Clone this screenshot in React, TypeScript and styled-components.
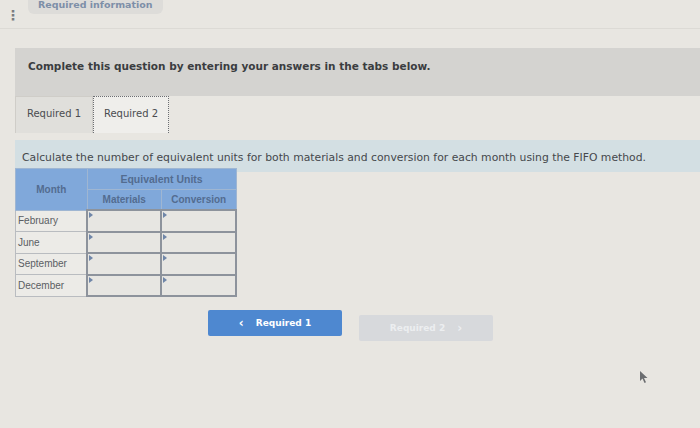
import React from 'react';
import styled, { createGlobalStyle } from 'styled-components';

const GlobalStyle = createGlobalStyle`
  html, body { margin: 0; padding: 0; }
  body { width: 700px; height: 428px; overflow: hidden; background: #e8e6e1; font-family: "DejaVu Sans", Verdana, sans-serif; }
`;

const Page = styled.div`
  position: relative; width: 700px; height: 428px; display: flex; flex-direction: column;
`;

const TopStrip = styled.div`
  height: 28px; display: flex; align-items: flex-start; gap: 8px; padding-left: 6px;
  border-bottom: 1px solid #dcdad5;
`;

const Dots = styled.span`
  color: #7a7c80; font-size: 14px; line-height: 14px; margin-top: 8px; font-weight: bold;
`;

const InfoTab = styled.div`
  padding: 0 10px; height: 14px; background: #dddcd9; white-space: nowrap;
  border-radius: 0 0 6px 6px; color: #7d8fa8; font-weight: bold; font-size: 9.5px; line-height: 10px;
`;

const Content = styled.div`
  padding-left: 15px; display: flex; flex-direction: column;
`;

const Instruction = styled.div`
  margin-top: 19px; height: 48px; box-sizing: border-box; background: #d4d3d0; padding: 12px 0 0 13px;
  font-weight: bold; font-size: 10.5px; color: #3b3d40;
`;

const Tabs = styled.div`
  display: flex; height: 41px; margin-top: -4px; align-items: stretch;
`;

const Tab = styled.div<{ $active?: boolean }>`
  width: ${p => (p.$active ? '74px' : '76px')}; display: flex; align-items: center; justify-content: center;
  font-size: 10px; color: #4a4c50; padding-bottom: 4px;
  background: ${p => (p.$active ? '#efeeeb' : '#e0dfdb')};
  border: ${p => (p.$active ? '1px dotted #6c6e72' : '1px solid #cfcdc8')};
  border-bottom: none;
  margin-top: 4px;
`;

const Prompt = styled.div`
  margin-top: 7px; height: 32px; background: #d3dfe3; display: flex; align-items: center; padding: 2px 0 0 7px;
  box-sizing: border-box; font-size: 10.8px; color: #45484c; white-space: nowrap;
`;

const Table = styled.table`
  border-collapse: collapse; width: 222px; margin-top: -4px; font-family: "Liberation Sans", Arial, sans-serif;
  font-size: 10px;
  th { background: #80a8da; color: #536c90; font-weight: bold; border: 1px solid #9fb6d2; padding: 0; }
  td { height: 19.5px; padding: 0; border: 1px solid #b9bcc0; }
`;

const MonthHead = styled.th`
  width: 71px; height: 40px;
`;

const GroupHead = styled.th`
  height: 20px; font-size: 10.5px;
`;

const SubHead = styled.th`
  height: 19px; width: 74px;
`;

const MonthCell = styled.td`
  background: #ecebe7; color: #5b5e63; padding-left: 2px !important; text-align: left;
`;

const InputCell = styled.td`
  position: relative; background: #e7e6e2; border: 2px solid #8d939c !important;
  &::before {
    content: ''; position: absolute; top: 1px; left: 1px; border-top: 3px solid transparent; border-bottom: 3px solid transparent;
    border-left: 4px solid #6f86a8;
  }
`;

const Buttons = styled.div`
  display: flex; gap: 17px; margin-left: 193px; margin-top: 13px; align-items: flex-start;
`;

const NavButton = styled.button<{ $disabled?: boolean }>`
  width: 134px; height: 26px; border: none; border-radius: 2px;
  background: ${p => (p.$disabled ? '#d7d9dc' : '#4e88d0')};
  color: ${p => (p.$disabled ? '#eceef0' : '#ffffff')};
  margin-top: ${p => (p.$disabled ? '5px' : '0')};
  font-family: "DejaVu Sans", Verdana, sans-serif; font-weight: bold; font-size: 9px;
  display: flex; align-items: center; justify-content: center; gap: 12px;
`;

const Arrow = styled.span`
  font-size: 12px; font-weight: bold;
`;

const Cursor = styled.svg`
  position: absolute; left: 639px; top: 370px;
`;

const months = ['February', 'June', 'September', 'December'];

export default function App() {
  return (
    <Page>
      <GlobalStyle />
      <TopStrip>
        <Dots>⋮</Dots>
        <InfoTab>Required information</InfoTab>
      </TopStrip>
      <Content>
        <Instruction>Complete this question by entering your answers in the tabs below.</Instruction>
        <Tabs>
          <Tab>Required 1</Tab>
          <Tab $active>Required 2</Tab>
        </Tabs>
        <Prompt>
          Calculate the number of equivalent units for both materials and conversion for each month using the FIFO method.
        </Prompt>
        <Table>
          <thead>
            <tr>
              <MonthHead rowSpan={2}>Month</MonthHead>
              <GroupHead colSpan={2}>Equivalent Units</GroupHead>
            </tr>
            <tr>
              <SubHead>Materials</SubHead>
              <SubHead>Conversion</SubHead>
            </tr>
          </thead>
          <tbody>
            {months.map(m => (
              <tr key={m}>
                <MonthCell>{m}</MonthCell>
                <InputCell />
                <InputCell />
              </tr>
            ))}
          </tbody>
        </Table>
        <Buttons>
          <NavButton>
            <Arrow>‹</Arrow> Required 1
          </NavButton>
          <NavButton $disabled>
            Required 2 <Arrow>›</Arrow>
          </NavButton>
        </Buttons>
      </Content>
      <Cursor width="10" height="14" viewBox="0 0 10 14">
        <path d="M1 1 L1 11 L3.5 8.5 L5.5 13 L7 12.3 L5 8 L8.5 8 Z" fill="#6b6d70" />
      </Cursor>
    </Page>
  );
}
